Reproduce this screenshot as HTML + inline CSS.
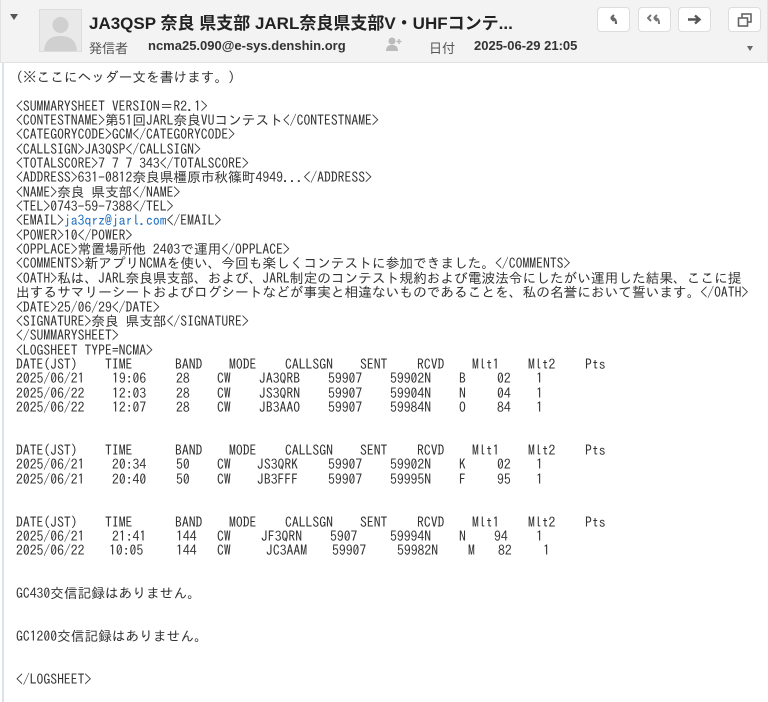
<!DOCTYPE html>
<html><head><meta charset="utf-8"><style>
body{margin:0;width:768px;height:702px;background:#fff;overflow:hidden;position:relative;font-family:"Liberation Sans","Noto Sans CJK JP",sans-serif}
#hd{position:absolute;left:0;top:0;width:766px;height:62px;background:#f3f3f3;border:1px solid #e2e2e2;border-top:none}
.tri{position:absolute;width:0;height:0;border-left:4px solid transparent;border-right:4px solid transparent;border-top:6px solid #555}
#av{position:absolute;left:38px;top:9px;width:41px;height:41px;background:#e9e9e9;border:1px solid #ddd;overflow:hidden}
#title{position:absolute;left:88px;top:9px;font-size:17px;font-weight:bold;color:#222;white-space:nowrap}
.l2{position:absolute;top:38px;font-size:13px;color:#555;white-space:nowrap}
.b{font-weight:bold;color:#333}
.btn{position:absolute;top:7px;width:31px;height:23px;background:#fff;border:1px solid #ddd;border-radius:4px}
.btn svg{position:absolute;left:8px;top:5px}
#lb{position:absolute;left:2px;top:63px;width:2px;height:639px;background:#dde2ea}
#body{position:absolute;left:16px;top:70px;font-family:"IPAGothic","Liberation Mono",monospace;font-size:13.7px;line-height:14.35px;color:#333;white-space:pre}
.r{position:relative;height:14.35px}
.r span{position:absolute;top:0}
a{color:#1a6fc4}
</style></head><body>
<div id="hd">
<div class="tri" style="left:9px;top:14px"></div>
<div id="av"><svg width="41" height="41"><circle cx="20.5" cy="15" r="8" fill="#d0d0d0"/><path d="M4 41 C5 29 12 26 20.5 26 C29 26 36 29 37 41Z" fill="#d0d0d0"/></svg></div>
<div id="title">JA3QSP 奈良 県支部 JARL奈良県支部V・UHFコンテ...</div>
<div class="l2" style="left:88px">発信者</div>
<div class="l2 b" style="left:147px">ncma25.090@e-sys.denshin.org</div>
<svg style="position:absolute;left:383px;top:36px" width="20" height="16"><circle cx="8" cy="5" r="3.5" fill="#bbb"/><path d="M2 15 C2 10 5 9 8 9 C11 9 14 10 14 15Z" fill="#bbb"/><path d="M15 3v5M12.5 5.5h5" stroke="#bbb" stroke-width="1.5"/></svg>
<div class="l2" style="left:428px">日付</div>
<div class="l2 b" style="left:473px">2025-06-29 21:05</div>
<div class="tri" style="left:746px;top:46px;border-top-color:#666;border-left-width:3.5px;border-right-width:3.5px;border-top-width:5px"></div>
<div class="btn" style="left:596px"><svg width="16" height="13"><path d="M10 11 C10 7 9 5 5 5 M5 5 L8 2 M5 5 L8 8" stroke="#666" stroke-width="2.2" fill="none"/></svg></div>
<div class="btn" style="left:637px"><svg width="16" height="13"><path d="M12 11 C12 7 11 5 7 5 M7 5 L10 2 M7 5 L10 8 M4 2 L1 5 L4 8" stroke="#777" stroke-width="2" fill="none"/></svg></div>
<div class="btn" style="left:677px"><svg width="16" height="13"><path d="M1 6.5 H12 M8 2.5 L12.5 6.5 L8 10.5" stroke="#555" stroke-width="2.4" fill="none"/></svg></div>
<div class="btn" style="left:727px"><svg width="16" height="14"><rect x="5" y="1" width="9" height="8" stroke="#666" stroke-width="1.6" fill="none"/><rect x="1.5" y="5" width="9" height="8" stroke="#666" stroke-width="1.6" fill="#fff"/></svg></div>
</div>
<div id="lb"></div>
<div id="body">(※ここにヘッダー文を書けます。)

&lt;SUMMARYSHEET VERSION＝R2.1&gt;
&lt;CONTESTNAME&gt;第51回JARL奈良VUコンテスト&lt;/CONTESTNAME&gt;
&lt;CATEGORYCODE&gt;GCM&lt;/CATEGORYCODE&gt;
&lt;CALLSIGN&gt;JA3QSP&lt;/CALLSIGN&gt;
&lt;TOTALSCORE&gt;7 7 7 343&lt;/TOTALSCORE&gt;
&lt;ADDRESS&gt;631-0812奈良県橿原市秋篠町4949...&lt;/ADDRESS&gt;
&lt;NAME&gt;奈良 県支部&lt;/NAME&gt;
&lt;TEL&gt;0743-59-7388&lt;/TEL&gt;
&lt;EMAIL&gt;<a>ja3qrz@jarl.com</a>&lt;/EMAIL&gt;
&lt;POWER&gt;10&lt;/POWER&gt;
&lt;OPPLACE&gt;常置場所他 2403で運用&lt;/OPPLACE&gt;
&lt;COMMENTS&gt;新アプリNCMAを使い、今回も楽しくコンテストに参加できました。&lt;/COMMENTS&gt;
&lt;OATH&gt;私は、JARL奈良県支部、および、JARL制定のコンテスト規約および電波法令にしたがい運用した結果、ここに提
出するサマリーシートおよびログシートなどが事実と相違ないものであることを、私の名誉において誓います。&lt;/OATH&gt;
&lt;DATE&gt;25/06/29&lt;/DATE&gt;
&lt;SIGNATURE&gt;奈良 県支部&lt;/SIGNATURE&gt;
&lt;/SUMMARYSHEET&gt;
&lt;LOGSHEET TYPE=NCMA&gt;
<div class="r"><span style="left:0">DATE(JST)</span><span style="left:89px">TIME</span><span style="left:159px">BAND</span><span style="left:213px">MODE</span><span style="left:269px">CALLSGN</span><span style="left:344px">SENT</span><span style="left:401px">RCVD</span><span style="left:456px">Mlt1</span><span style="left:512px">Mlt2</span><span style="left:569px">Pts</span></div><div class="r"><span style="left:0">2025/06/21</span><span style="left:96px">19:06</span><span style="left:160px">28</span><span style="left:201px">CW</span><span style="left:243px">JA3QRB</span><span style="left:312px">59907</span><span style="left:374px">59902N</span><span style="left:443px">B</span><span style="left:481px">02</span><span style="left:520px">1</span></div><div class="r"><span style="left:0">2025/06/22</span><span style="left:96px">12:03</span><span style="left:160px">28</span><span style="left:201px">CW</span><span style="left:243px">JS3QRN</span><span style="left:312px">59907</span><span style="left:374px">59904N</span><span style="left:443px">N</span><span style="left:481px">04</span><span style="left:520px">1</span></div><div class="r"><span style="left:0">2025/06/22</span><span style="left:96px">12:07</span><span style="left:160px">28</span><span style="left:201px">CW</span><span style="left:243px">JB3AAO</span><span style="left:312px">59907</span><span style="left:374px">59984N</span><span style="left:443px">O</span><span style="left:481px">84</span><span style="left:520px">1</span></div>

<div class="r"><span style="left:0">DATE(JST)</span><span style="left:89px">TIME</span><span style="left:159px">BAND</span><span style="left:213px">MODE</span><span style="left:269px">CALLSGN</span><span style="left:344px">SENT</span><span style="left:401px">RCVD</span><span style="left:456px">Mlt1</span><span style="left:512px">Mlt2</span><span style="left:569px">Pts</span></div><div class="r"><span style="left:0">2025/06/21</span><span style="left:96px">20:34</span><span style="left:160px">50</span><span style="left:201px">CW</span><span style="left:241px">JS3QRK</span><span style="left:312px">59907</span><span style="left:374px">59902N</span><span style="left:443px">K</span><span style="left:481px">02</span><span style="left:520px">1</span></div><div class="r"><span style="left:0">2025/06/21</span><span style="left:96px">20:40</span><span style="left:160px">50</span><span style="left:201px">CW</span><span style="left:241px">JB3FFF</span><span style="left:312px">59907</span><span style="left:374px">59995N</span><span style="left:443px">F</span><span style="left:481px">95</span><span style="left:520px">1</span></div>

<div class="r"><span style="left:0">DATE(JST)</span><span style="left:89px">TIME</span><span style="left:159px">BAND</span><span style="left:213px">MODE</span><span style="left:269px">CALLSGN</span><span style="left:344px">SENT</span><span style="left:401px">RCVD</span><span style="left:456px">Mlt1</span><span style="left:512px">Mlt2</span><span style="left:569px">Pts</span></div><div class="r"><span style="left:0">2025/06/21</span><span style="left:96px">21:41</span><span style="left:160px">144</span><span style="left:201px">CW</span><span style="left:245px">JF3QRN</span><span style="left:314px">5907</span><span style="left:374px">59994N</span><span style="left:443px">N</span><span style="left:478px">94</span><span style="left:520px">1</span></div><div class="r"><span style="left:0">2025/06/22</span><span style="left:93px">10:05</span><span style="left:160px">144</span><span style="left:201px">CW</span><span style="left:250px">JC3AAM</span><span style="left:316px">59907</span><span style="left:381px">59982N</span><span style="left:452px">M</span><span style="left:482px">82</span><span style="left:527px">1</span></div>

GC430交信記録はありません。


GC1200交信記録はありません。


&lt;/LOGSHEET&gt;</div>
</body></html>
